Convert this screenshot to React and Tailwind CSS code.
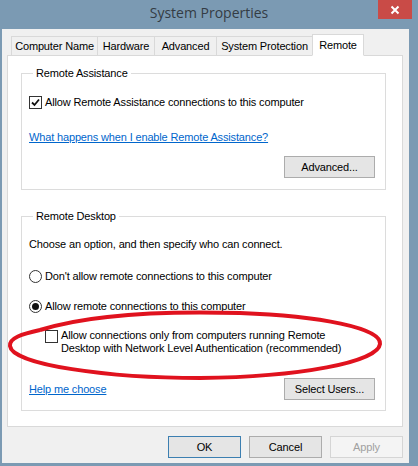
import React from "react";

// Small Windows 8 style controls
const Checkbox = ({ checked }) => (
  <span className="w-[13px] h-[13px] border border-[#333333] bg-white flex items-center justify-center shrink-0">
    {checked && (
      <svg width="11" height="11" viewBox="0 0 11 11">
        <path d="M2 5.5 L4.5 8 L9 2.5" fill="none" stroke="#111" strokeWidth="1.8" />
      </svg>
    )}
  </span>
);

const Radio = ({ checked }) => (
  <span className="w-[13px] h-[13px] rounded-full border border-[#333333] bg-white flex items-center justify-center shrink-0">
    {checked && <span className="w-[7px] h-[7px] rounded-full bg-[#111111]" />}
  </span>
);

const Button = ({ children, variant = "normal", className = "" }) => {
  const styles = {
    normal: "border-[#acacac] bg-[#e5e5e5] text-black",
    primary: "border-[#3c7fb1] bg-[#e5e5e5] text-black",
    disabled: "border-[#d5d5d5] bg-[#f4f4f4] text-[#a0a0a0]",
  };
  return (
    <button
      className={`h-[22px] border flex items-center justify-center ${styles[variant]} ${className}`}
    >
      {children}
    </button>
  );
};

const tabs = ["Computer Name", "Hardware", "Advanced", "System Protection"];
const tabWidths = ["w-[87px]", "w-[58px]", "w-[63px]", "w-[97px]"];

export default function App() {
  return (
    <div className="relative w-[418px] h-[466px] bg-[#7b9ab3] flex flex-col font-['Liberation_Sans',Arial,sans-serif] text-[11px] tracking-[-0.15px] leading-[15px] text-black overflow-hidden">
      {/* Title bar */}
      <div className="h-[29px] grid grid-cols-[40px_1fr_40px]">
        <div />
        <div className="text-center text-[14px] tracking-normal leading-[26px] text-[#343c44] font-['Open_Sans',sans-serif]">
          System Properties
        </div>
        <div className="flex justify-end">
          <div className="w-[34px] h-[19px] mr-[6px] bg-[#c94b47] flex items-center justify-center">
            <svg width="10" height="10" viewBox="0 0 10 10">
              <path d="M1.5 1.5 L8.5 8.5 M8.5 1.5 L1.5 8.5" stroke="#fff" strokeWidth="2" />
            </svg>
          </div>
        </div>
      </div>

      {/* Dialog body */}
      <div className="ml-[2px] mr-[9px] mb-[3px] flex-1 bg-[#f0f0f0] flex flex-col">
        {/* Tabs */}
        <div className="ml-[9px] mt-[5px] h-[22px] flex items-end -mb-[1px] relative z-10">
          {tabs.map((t, i) => (
            <div
              key={t}
              className={`${tabWidths[i]} h-[20px] border border-[#d9d9d9] ${i > 0 ? "-ml-[1px]" : ""} bg-[#f0f0f0] flex items-center justify-center whitespace-nowrap`}
            >
              {t}
            </div>
          ))}
          <div className="w-[52px] h-[22px] -ml-[1px] border border-[#d9d9d9] border-b-white bg-white flex items-start justify-center pt-[3px]">
            Remote
          </div>
        </div>

        {/* Panel */}
        <div className="ml-[5px] mr-[6px] h-[372px] bg-white border border-[#d9d9d9] pl-[13px] pr-[16px]">
          {/* Remote Assistance */}
          <fieldset className="mt-[10px] border border-[#dcdcdc] pl-[7px] pr-[10px] pb-[11px]">
            <legend className="ml-[4px] px-[3px] leading-[15px]">Remote Assistance</legend>
            <div className="mt-[13px] h-[16px] flex items-center gap-[3px]">
              <Checkbox checked />
              <span>Allow Remote Assistance connections to this computer</span>
            </div>
            <div className="mt-[19px] h-[16px] flex items-center">
              <span className="text-[#0066cc] underline">What happens when I enable Remote Assistance?</span>
            </div>
            <div className="mt-[11px] flex justify-end">
              <Button className="w-[91px]">Advanced...</Button>
            </div>
          </fieldset>

          {/* Remote Desktop */}
          <fieldset className="mt-[19px] border border-[#dcdcdc] pl-[7px] pr-[10px] pb-[10px]">
            <legend className="ml-[4px] px-[3px] leading-[15px]">Remote Desktop</legend>
            <div className="mt-[12px] h-[16px] flex items-center">
              Choose an option, and then specify who can connect.
            </div>
            <div className="mt-[16px] h-[16px] flex items-center gap-[3px]">
              <Radio />
              <span>Don&apos;t allow remote connections to this computer</span>
            </div>
            <div className="mt-[14px] h-[16px] flex items-center gap-[3px]">
              <Radio checked />
              <span>Allow remote connections to this computer</span>
            </div>
            <div className="mt-[15px] ml-[16px] flex items-start gap-[3px] leading-[13px]">
              <span className="mt-[1px]">
                <Checkbox />
              </span>
              <span>
                Allow connections only from computers running Remote
                <br />
                Desktop with Network Level Authentication (recommended)
              </span>
            </div>
            <div className="mt-[23px] flex items-center justify-between">
              <span className="text-[#0066cc] underline">Help me choose</span>
              <Button className="w-[91px]">Select Users...</Button>
            </div>
          </fieldset>
        </div>

        {/* Dialog buttons */}
        <div className="mt-[9px] mr-[6px] flex justify-end gap-[8px]">
          <Button variant="primary" className="w-[73px]">OK</Button>
          <Button className="w-[73px]">Cancel</Button>
          <Button variant="disabled" className="w-[73px]">Apply</Button>
        </div>
      </div>

      {/* Red hand-drawn highlight ellipse */}
      <svg className="absolute left-0 top-0 pointer-events-none" width="418" height="466" viewBox="0 0 418 466">
        <path
          d="M40 330 C 90 314, 170 311, 240 313 C 320 316, 382 328, 380 344 C 378 362, 300 377, 200 378 C 110 378, 12 365, 10 346 C 9 338, 22 334, 40 330"
          fill="none"
          stroke="#e0121e"
          strokeWidth="4"
        />
      </svg>
    </div>
  );
}
